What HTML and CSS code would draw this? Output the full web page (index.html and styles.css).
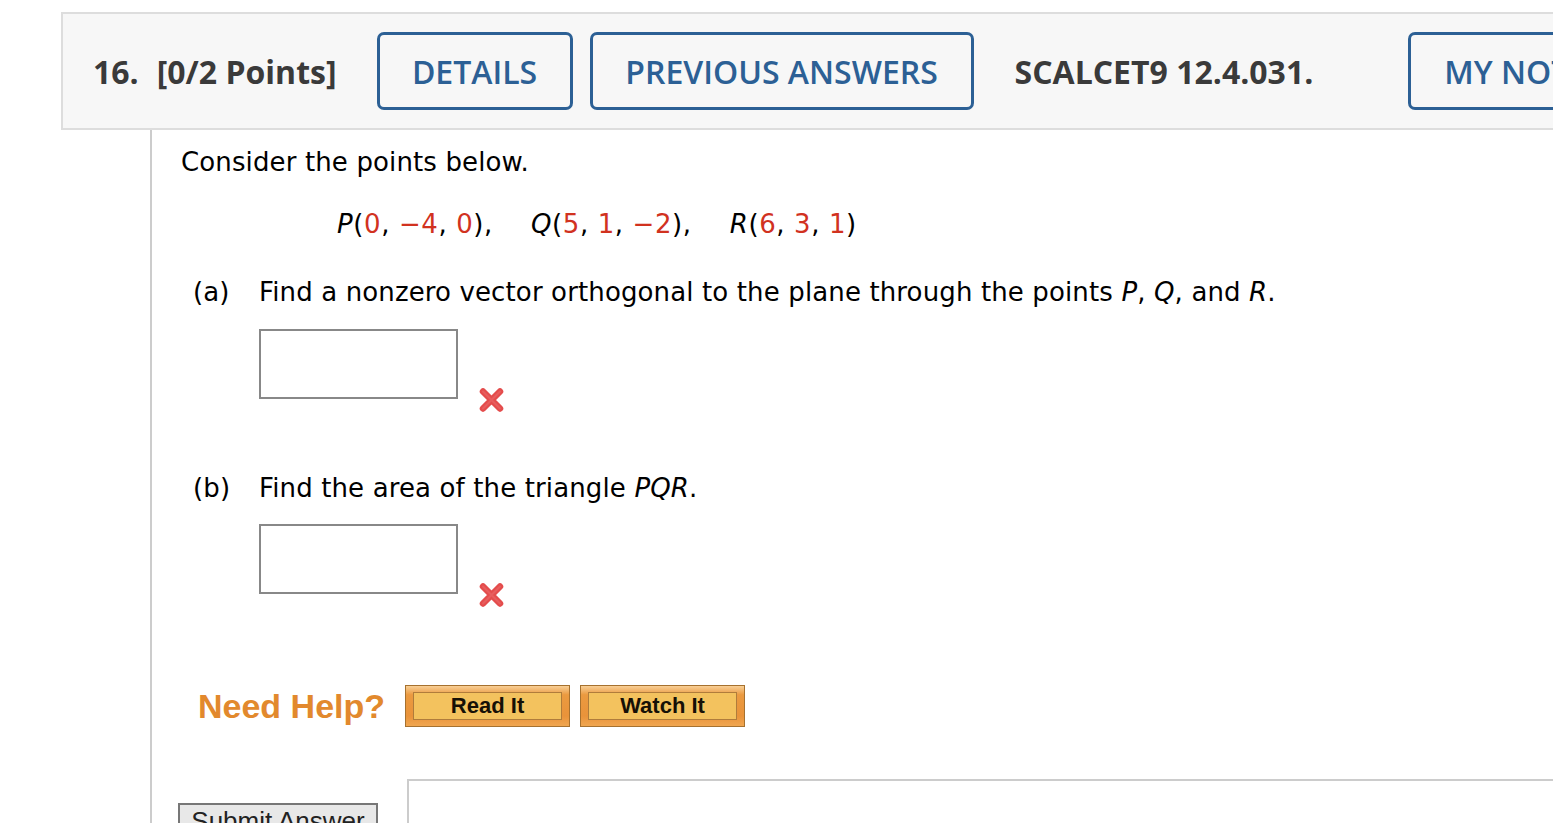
FILE: index.html
```html
<!DOCTYPE html>
<html>
<head>
<meta charset="utf-8">
<link rel="stylesheet" href="styles.css">
</head>
<body>
<div class="page">
  <div class="qhead">
    <span class="qnum">16.</span>
    <span class="qpts">[0/2 Points]</span>
    <span class="hbtn btn-details">DETAILS</span>
    <span class="hbtn btn-prev">PREVIOUS ANSWERS</span>
    <span class="qref">SCALCET9 12.4.031.</span>
    <span class="hbtn btn-notes">MY NOTES</span>
  </div>
  <div class="content">
    <p class="intro">Consider the points below.</p>
    <p class="points"><span class="pt"><i>P</i>(<span class="r">0</span>, <span class="r">−4</span>, <span class="r">0</span>),</span><span class="pt"><i>Q</i>(<span class="r">5</span>, <span class="r">1</span>, <span class="r">−2</span>),</span><span class="pt"><i>R</i>(<span class="r">6</span>, <span class="r">3</span>, <span class="r">1</span>)</span></p>

    <div class="part part-a">
      <span class="lbl">(a)</span>
      <div class="body">
        <p class="ptext">Find a nonzero vector orthogonal to the plane through the points <i>P</i>, <i>Q</i>, and <i>R</i>.</p>
        <div class="answer">
          <div class="box"></div>
          <svg class="xmark" width="27" height="26" viewBox="0 0 27 26"><path d="M5 4.5 L22 21.5 M22 4.5 L5 21.5" stroke="#e44c4c" stroke-width="6.5" stroke-linecap="round" fill="none"/><path d="M5 4.5 L22 21.5 M22 4.5 L5 21.5" stroke="#ea6a6a" stroke-width="2" stroke-linecap="round" fill="none" opacity="0.6"/></svg>
        </div>
      </div>
    </div>

    <div class="part part-b">
      <span class="lbl">(b)</span>
      <div class="body">
        <p class="ptext">Find the area of the triangle <i>PQR</i>.</p>
        <div class="answer">
          <div class="box"></div>
          <svg class="xmark" width="27" height="26" viewBox="0 0 27 26"><path d="M5 4.5 L22 21.5 M22 4.5 L5 21.5" stroke="#e44c4c" stroke-width="6.5" stroke-linecap="round" fill="none"/><path d="M5 4.5 L22 21.5 M22 4.5 L5 21.5" stroke="#ea6a6a" stroke-width="2" stroke-linecap="round" fill="none" opacity="0.6"/></svg>
        </div>
      </div>
    </div>

    <div class="help">
      <span class="needhelp">Need Help?</span>
      <span class="helpbtn"><span class="helpin">Read It</span></span>
      <span class="helpbtn"><span class="helpin">Watch It</span></span>
    </div>

    <div class="bottom">
      <span class="submit">Submit Answer</span>
      <div class="panel"></div>
    </div>
  </div>
</div>
</body>
</html>
```

FILE: styles.css
```css
html, body {
  margin: 0;
  padding: 0;
  background: #ffffff;
  overflow: hidden;
}
.page {
  width: 1800px;
  height: 823px;
  padding-top: 12px;
  box-sizing: border-box;
}
.qhead {
  margin-left: 61px;
  height: 118px;
  box-sizing: border-box;
  border: 2px solid #dddddd;
  background: #f7f7f7;
  display: flex;
  align-items: center;
  padding-left: 30px;
  font-family: "Open Sans", "DejaVu Sans", sans-serif;
  font-size: 32px;
  color: #3a3a3a;
  white-space: nowrap;
}
.qhead > span { flex-shrink: 0; }
.qnum, .qpts, .qref {
  font-weight: 700;
  padding-top: 1px;
}
.qnum { margin-right: 18px; }
.hbtn {
  height: 78px;
  box-sizing: border-box;
  border: 3px solid #2c6095;
  border-radius: 7px;
  color: #2c6095;
  font-weight: 600;
  display: flex;
  align-items: center;
  justify-content: center;
}
.btn-details { width: 196px; margin-left: 40px; }
.btn-prev { width: 384px; margin-left: 17px; }
.qref { margin-left: 41px; }
.btn-notes { width: 300px; margin-left: 95px; justify-content: flex-start; padding-left: 33px; }

.content {
  margin-left: 150px;
  border-left: 2px solid #cccccc;
  padding-left: 29px;
  padding-top: 17px;
  height: 720px;
  font-family: "DejaVu Sans", Verdana, sans-serif;
  font-size: 26px;
  letter-spacing: 0.13px;
  color: #000;
}
.intro {
  margin: 0;
  line-height: 30px;
}
.points {
  margin: 32px 0 0 0;
  padding-left: 156px;
  line-height: 30px;
  letter-spacing: 0.6px;
}
.pt { margin-right: 38px; }
.r { color: #d1321f; }
.part {
  display: flex;
  padding-left: 12px;
}
.part-a { margin-top: 38px; }
.part-b { margin-top: 60px; }
.lbl {
  width: 66px;
  line-height: 30px;
  flex-shrink: 0;
}
.ptext {
  margin: 0;
  line-height: 30px;
}
.answer {
  display: flex;
  align-items: flex-start;
  margin-top: 21px;
}
.part-a .answer { margin-top: 22px; }
.box {
  width: 199px;
  height: 70px;
  box-sizing: border-box;
  border: 2px solid #888888;
  background: #fff;
}
.xmark {
  margin-left: 20px;
  margin-top: 58px;
}
.help {
  display: flex;
  align-items: center;
  margin-top: 77px;
  padding-left: 17px;
  height: 42px;
  letter-spacing: 0;
}
.needhelp {
  font-family: "Liberation Sans", Arial, sans-serif;
  font-weight: 700;
  font-size: 34px;
  color: #e2892d;
  margin-right: 20px;
}
.helpbtn {
  width: 165px;
  height: 42px;
  box-sizing: border-box;
  border: 1px solid #a6712f;
  background: linear-gradient(#f8cf96 0%, #eb9a40 22%, #e9933a 75%, #f0a650 100%);
  padding: 6px 7px;
  margin-right: 10px;
  display: flex;
}
.helpin {
  flex: 1;
  border: 1px solid #b07c3b;
  background: #f3c25e;
  display: flex;
  align-items: center;
  justify-content: center;
  font-family: "Liberation Sans", Arial, sans-serif;
  font-weight: 700;
  font-size: 22px;
  color: #161006;
}
.bottom {
  display: flex;
  align-items: flex-start;
  margin-top: 52px;
  margin-left: -3px;
  letter-spacing: 0;
}
.submit {
  margin-top: 24px;
  width: 200px;
  height: 40px;
  box-sizing: border-box;
  border: 2px solid #777777;
  background: #e8e8e8;
  font-family: "Liberation Sans", Arial, sans-serif;
  font-size: 26px;
  color: #222;
  text-align: center;
  line-height: 32px;
  white-space: nowrap;
}
.panel {
  margin-left: 29px;
  width: 1200px;
  height: 200px;
  border: 2px solid #cccccc;
  border-right: none;
}
```
